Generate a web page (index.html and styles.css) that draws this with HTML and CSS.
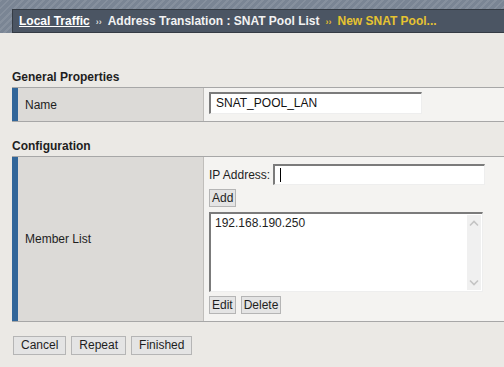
FILE: index.html
```html
<!DOCTYPE html>
<html>
<head>
<meta charset="utf-8">
<link rel="stylesheet" href="styles.css">
</head>
<body>
<div class="topbar">
  <div class="crumbs">
    <a class="crumb-link">Local Traffic</a>
    <span class="sep">››</span>
    <span class="crumb">Address Translation : SNAT Pool List</span>
    <span class="sep sep-cur">››</span>
    <span class="crumb-cur">New SNAT Pool...</span>
  </div>
</div>
<div class="content">
  <div class="section-title first">General Properties</div>
  <div class="prop-row">
    <div class="label name-label">Name</div>
    <div class="value name-value">
      <div class="field name-field">SNAT_POOL_LAN</div>
    </div>
  </div>

  <div class="section-title">Configuration</div>
  <div class="prop-row">
    <div class="label member-label">Member List</div>
    <div class="value member-value">
      <div class="ip-line">
        <span class="ip-text">IP Address:</span>
        <div class="field ip-field"><span class="caret"></span></div>
      </div>
      <div class="btn small add-btn">Add</div>
      <div class="listbox">
        <div class="list-items">192.168.190.250</div>
        <div class="scroll">
          <svg class="chev" width="12" height="8" viewBox="0 0 12 8"><path d="M2 6.5 L6 2.5 L10 6.5" fill="none" stroke="#c4c4c4" stroke-width="1.6"/></svg>
          <svg class="chev" width="12" height="8" viewBox="0 0 12 8"><path d="M2 1.5 L6 5.5 L10 1.5" fill="none" stroke="#c4c4c4" stroke-width="1.6"/></svg>
        </div>
      </div>
      <div class="btn-line">
        <div class="btn small">Edit</div>
        <div class="btn small">Delete</div>
      </div>
    </div>
  </div>

  <div class="actions">
    <div class="btn big">Cancel</div>
    <div class="btn big">Repeat</div>
    <div class="btn big">Finished</div>
  </div>
</div>
</body>
</html>
```

FILE: styles.css
```css
html, body {
  margin: 0;
  padding: 0;
}
body {
  width: 504px;
  height: 367px;
  overflow: hidden;
  background: #ebe9e5;
  font-family: "Liberation Sans", Arial, sans-serif;
  font-size: 12px;
  color: #1e1e1e;
}
.topbar {
  height: 33px;
  box-sizing: border-box;
  padding: 9px 0 0 12px;
  background-color: #7a8594;
  background-image: repeating-linear-gradient(135deg, rgba(255,255,255,0.09) 0 2px, rgba(0,0,0,0) 2px 5px);
}
.crumbs {
  height: 24px;
  box-sizing: border-box;
  background: #4b5563;
  border: 1px solid #343b44;
  border-right: none;
  display: flex;
  align-items: center;
  padding-left: 6px;
  font-weight: bold;
  font-size: 12px;
  white-space: nowrap;
}
.crumb-link {
  color: #ffffff;
  text-decoration: underline;
}
.sep {
  color: #d8d8d8;
  font-size: 9px;
  margin: 2px 6px 0 6px;
}
.sep-cur {
  color: #e2bd2e;
}
.crumb {
  color: #f2f2f2;
}
.crumb-cur {
  color: #e6c331;
}
.content {
  padding-left: 12px;
}
.section-title {
  font-weight: bold;
  line-height: 14px;
  margin-top: 17px;
  margin-bottom: 3px;
}
.section-title.first {
  margin-top: 37px;
}
.prop-row {
  display: flex;
  border-top: 1px solid #a7a7a7;
  border-bottom: 1px solid #a7a7a7;
  background: #f4f3f1;
}
.label {
  flex: none;
  width: 178px;
  background: #dcdad7;
  border-left: 6px solid #31669a;
  border-right: 1px solid #c0bebb;
  display: flex;
  align-items: center;
  padding-left: 7px;
}
.value {
  flex: 1;
  padding: 4px 5px 7px 5px;
}
.field {
  box-sizing: border-box;
  background: #ffffff;
  border-top: 2px solid #7b7b7b;
  border-left: 2px solid #7b7b7b;
  border-right: 1px solid #eeeeee;
  border-bottom: 1px solid #eeeeee;
}
.name-field {
  width: 213px;
  height: 22px;
  line-height: 19px;
  padding-left: 5px;
  color: #111;
}
.member-value {
  padding-top: 7px;
  padding-bottom: 7px;
  display: flex;
  flex-direction: column;
  align-items: flex-start;
}
.ip-line {
  display: flex;
  align-items: center;
  height: 21px;
}
.ip-text {
  margin-right: 3px;
}
.ip-field {
  width: 212px;
  height: 21px;
  position: relative;
}
.caret {
  position: absolute;
  left: 5px;
  top: 2px;
  width: 1px;
  height: 14px;
  background: #000;
}
.btn {
  box-sizing: border-box;
  background: #e4e4e4;
  border: 1px solid #b5b5b5;
  color: #1e1e1e;
  text-align: center;
}
.btn.small {
  height: 18px;
  line-height: 16px;
  padding: 0 2px;
}
.add-btn {
  margin-top: 4px;
}
.listbox {
  margin-top: 5px;
  width: 274px;
  height: 80px;
  box-sizing: border-box;
  background: #ffffff;
  border-top: 2px solid #7b7b7b;
  border-left: 2px solid #7b7b7b;
  border-right: 1px solid #eeeeee;
  border-bottom: 1px solid #eeeeee;
  display: flex;
}
.list-items {
  flex: 1;
  padding: 2px 0 0 4px;
  line-height: 14px;
}
.scroll {
  width: 14px;
  margin: 1px 1px 1px 0;
  background: #f0f0f0;
  display: flex;
  flex-direction: column;
  justify-content: space-between;
  align-items: center;
  padding: 4px 0 3px 0;
}
.chev {
  display: block;
}
.btn-line {
  display: flex;
  gap: 5px;
  margin-top: 4px;
}
.actions {
  display: flex;
  gap: 5px;
  margin-top: 14px;
  padding-left: 1px;
}
.btn.big {
  height: 19px;
  line-height: 17px;
  padding: 0 7px;
  font-size: 12px;
}
```
